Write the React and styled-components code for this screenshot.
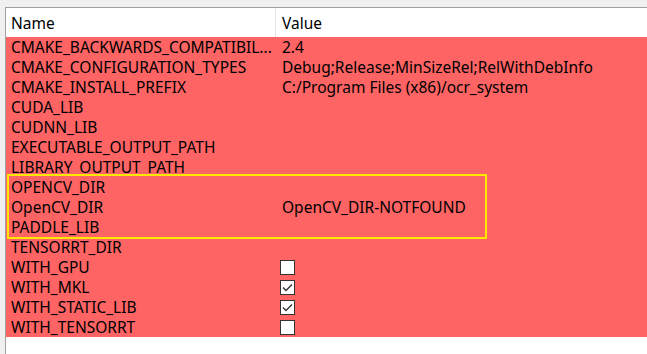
import React from 'react';
import styled, { createGlobalStyle } from 'styled-components';

const GlobalStyle = createGlobalStyle`
  html, body {
    margin: 0;
    padding: 0;
    background: #f0f0f0;
    overflow: hidden;
  }
  body {
    font-family: "Noto Sans", "Liberation Sans", sans-serif;
  }
`;

const Frame = styled.div`
  margin: 7px 0 0 5px;
  height: 347px;
  background: #ffffff;
  border-top: 1px solid #a0a0a0;
  border-left: 1px solid #a0a0a0;
  box-sizing: border-box;
`;

const Header = styled.div`
  display: grid;
  grid-template-columns: 270px 1fr;
  height: 29px;
  background: #ffffff;
`;

const HeaderCell = styled.div`
  display: flex;
  align-items: center;
  padding-left: ${({ $pad }) => $pad}px;
  font-size: 15.5px;
  color: #000;
  border-right: ${({ $divider }) => ($divider ? '1px solid #e5e5e5' : 'none')};
`;

const Row = styled.div`
  display: grid;
  grid-template-columns: 270px 1fr;
  height: 20px;
  background: #ff6464;
  font-size: 15.5px;
  color: #000;
`;

const NameCell = styled.div`
  padding-left: 5px;
  line-height: 20px;
  white-space: nowrap;
`;

const ValueCell = styled.div`
  padding-left: 6px;
  line-height: 20px;
  display: flex;
  align-items: center;
  white-space: nowrap;
`;

const Box = styled.span`
  width: 15px;
  height: 15px;
  box-sizing: border-box;
  margin-left: -2px;
  border: 1px solid #333;
  background: #fff;
  display: flex;
  align-items: center;
  justify-content: center;
`;

const Group = styled.div`
  position: relative;
`;

const Highlight = styled.div`
  position: absolute;
  top: -3px;
  left: 1px;
  width: 480px;
  height: 65px;
  box-sizing: border-box;
  border: 2px solid #ffe800;
  pointer-events: none;
`;

function Check({ checked }) {
  return (
    <Box>
      {checked && (
        <svg width="11" height="9" viewBox="0 0 11 9">
          <polyline points="1,4.5 4,7.5 10,1.5" fill="none" stroke="#333" strokeWidth="1.4" />
        </svg>
      )}
    </Box>
  );
}

const before = [
  ['CMAKE_BACKWARDS_COMPATIBIL...', '2.4'],
  ['CMAKE_CONFIGURATION_TYPES', 'Debug;Release;MinSizeRel;RelWithDebInfo'],
  ['CMAKE_INSTALL_PREFIX', 'C:/Program Files (x86)/ocr_system'],
  ['CUDA_LIB', ''],
  ['CUDNN_LIB', ''],
  ['EXECUTABLE_OUTPUT_PATH', ''],
  ['LIBRARY_OUTPUT_PATH', ''],
];

const marked = [
  ['OPENCV_DIR', ''],
  ['OpenCV_DIR', 'OpenCV_DIR-NOTFOUND'],
  ['PADDLE_LIB', ''],
];

const after = [
  ['TENSORRT_DIR', ''],
  ['WITH_GPU', false],
  ['WITH_MKL', true],
  ['WITH_STATIC_LIB', true],
  ['WITH_TENSORRT', false],
];

function EntryRow({ name, value }) {
  return (
    <Row>
      <NameCell>{name}</NameCell>
      <ValueCell>
        {typeof value === 'boolean' ? <Check checked={value} /> : value}
      </ValueCell>
    </Row>
  );
}

export default function App() {
  return (
    <>
      <GlobalStyle />
      <Frame>
        <Header>
          <HeaderCell $pad={5} $divider>Name</HeaderCell>
          <HeaderCell $pad={6}>Value</HeaderCell>
        </Header>
        {before.map(([n, v]) => <EntryRow key={n} name={n} value={v} />)}
        <Group>
          {marked.map(([n, v]) => <EntryRow key={n} name={n} value={v} />)}
          <Highlight />
        </Group>
        {after.map(([n, v]) => <EntryRow key={n} name={n} value={v} />)}
      </Frame>
    </>
  );
}
